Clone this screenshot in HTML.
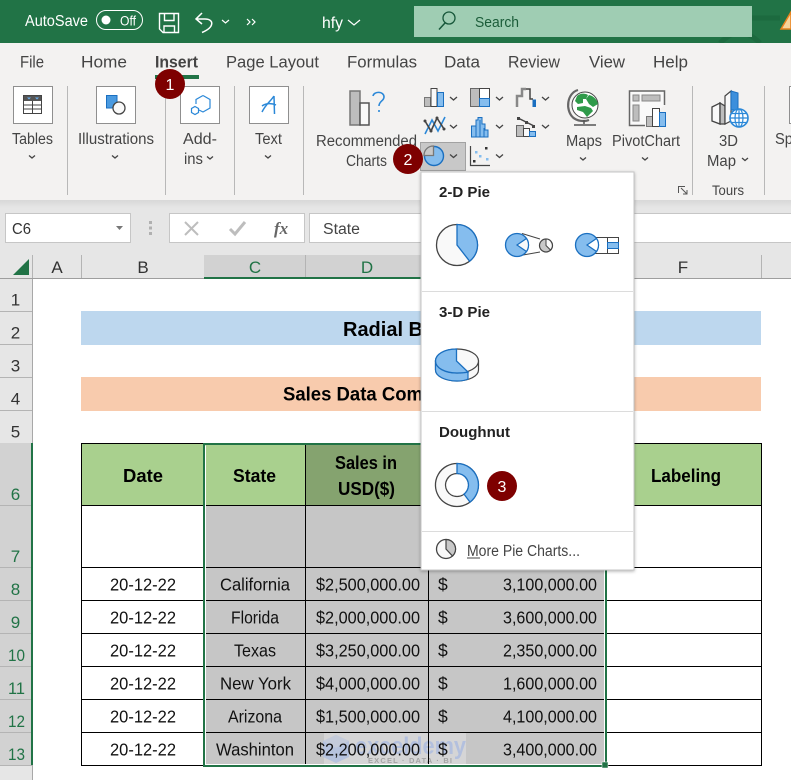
<!DOCTYPE html>
<html><head><meta charset="utf-8"><style>
html,body{margin:0;padding:0;background:#fff;width:791px;height:780px;overflow:hidden}
svg{display:block;font-family:"Liberation Sans",sans-serif}
.r{fill:#444;font-size:15.500px}
.t{fill:#444;font-size:16.500px}
.d{fill:#111;font-size:17.500px}
.b{fill:#000;font-size:18px;font-weight:bold}
.h{fill:#222;font-size:14.500px;font-weight:bold}
.n{fill:#333;font-size:17px}
.g{fill:#217346;font-size:17px}
.c{fill:none;stroke:#444;stroke-width:1.300}
.sep{stroke:#b8b8b8;stroke-width:1}
.ln{stroke:#000;stroke-width:1}
.hs{stroke:#b4b4b4;stroke-width:1}
.p{fill:#85bdee;stroke:#1a6fc0;stroke-width:1.300}
.q{fill:#f9f9f9;stroke:#444;stroke-width:1.300}
</style></head><body>
<svg width="791" height="780" viewBox="0 0 791 780" xmlns="http://www.w3.org/2000/svg">
<defs><linearGradient id="sh" x1="0" y1="0" x2="0" y2="1"><stop offset="0" stop-color="#d8d8d8"/><stop offset="1" stop-color="#e6e6e6"/></linearGradient>
<filter id="ms" x="-5%" y="-5%" width="110%" height="110%"><feDropShadow dx="0" dy="1" stdDeviation="1.500" flood-color="#000" flood-opacity=".3"/></filter></defs>

<!-- title bar -->
<rect width="791" height="43" fill="#217346"/>
<path d="M752 18H780M720 43q10-10 20-10t20 10" stroke="#1c6a3f" stroke-width="5" fill="none"/>
<text x="25" y="26" fill="#fff" font-size="15.500" textLength="63" lengthAdjust="spacingAndGlyphs">AutoSave</text>
<rect x="96.500" y="10.500" width="46" height="19" rx="9.500" fill="none" stroke="#fff"/>
<circle cx="106" cy="20" r="4.500" fill="#fff"/>
<text x="120" y="25.500" fill="#fff" font-size="13.500" textLength="16" lengthAdjust="spacingAndGlyphs">Off</text>
<path d="M159.500 13.500H178.500V32.500H163L159.500 29ZM164.500 13.500V20.500H174V13.500M164 32.500V26H174.500V32.500" fill="none" stroke="#fff" stroke-width="1.400"/>
<path d="M202 13L196 19L202 24M196 19H205C214 19 215 27 202 32.500" fill="none" stroke="#fff" stroke-width="1.500"/>
<path d="M222 20l3.500 3 3.500-3" fill="none" stroke="#fff" stroke-width="1.200"/>
<path d="M247 19l3 3-3 3M252 19l3 3-3 3" fill="none" stroke="#fff" stroke-width="1.200"/>
<text x="322" y="28" fill="#fff" font-size="16" textLength="21" lengthAdjust="spacingAndGlyphs">hfy</text>
<path d="M348 20l6 5 6-5" fill="none" stroke="#fff" stroke-width="1.200"/>
<rect x="414" y="6" width="338" height="31" fill="#9fcdb3"/>
<circle cx="449" cy="18" r="6" fill="none" stroke="#17573a" stroke-width="1.300"/>
<path d="M445 23l-6 6.500" stroke="#17573a" stroke-width="1.500"/>
<text x="475" y="27" fill="#1b5c39" font-size="15" textLength="44" lengthAdjust="spacingAndGlyphs">Search</text>
<path d="M781 29L791 12V29Z" fill="#f8d39a" stroke="#e8821e" stroke-width="1.500"/>

<!-- ribbon -->
<rect y="43" width="791" height="157" fill="#f3f2f1"/>
<text x="20" y="67.500" class="t" textLength="24" lengthAdjust="spacingAndGlyphs">File</text>
<text x="81" y="67.500" class="t" textLength="46" lengthAdjust="spacingAndGlyphs">Home</text>
<text x="155" y="67.500" class="t" font-weight="bold" textLength="43" lengthAdjust="spacingAndGlyphs">Insert</text>
<text x="226" y="67.500" class="t" textLength="93" lengthAdjust="spacingAndGlyphs">Page Layout</text>
<text x="347" y="67.500" class="t" textLength="70" lengthAdjust="spacingAndGlyphs">Formulas</text>
<text x="444" y="67.500" class="t" textLength="36" lengthAdjust="spacingAndGlyphs">Data</text>
<text x="508" y="67.500" class="t" textLength="52" lengthAdjust="spacingAndGlyphs">Review</text>
<text x="589" y="67.500" class="t" textLength="36" lengthAdjust="spacingAndGlyphs">View</text>
<text x="653" y="67.500" class="t" textLength="35" lengthAdjust="spacingAndGlyphs">Help</text>
<rect x="155" y="75" width="44" height="4" fill="#217346"/>

<!-- separators -->
<path class="sep" d="M67.500 86V195M165.500 86V195M234.500 86V195M303.500 86V195M692.500 86V195M764.500 86V195"/>

<!-- boxed buttons -->
<rect x="13.500" y="86.500" width="39" height="37" fill="#fff" stroke="#8f8f8f"/>
<rect x="96.500" y="86.500" width="39" height="37" fill="#fff" stroke="#8f8f8f"/>
<rect x="180.500" y="86.500" width="39" height="37" fill="#fff" stroke="#8f8f8f"/>
<rect x="249.500" y="86.500" width="39" height="37" fill="#fff" stroke="#8f8f8f"/>
<!-- tables icon -->
<rect x="23.500" y="95.500" width="18" height="18" fill="#fff" stroke="#444"/>
<rect x="24" y="96" width="17" height="5" fill="#555"/>
<path d="M27 97.500l2 2 2-2zM35 97.500l2 2 2-2z" fill="#6ab0ee"/>
<path d="M24 105H41M24 109H41M32.500 101V113" stroke="#444"/>
<!-- illustrations -->
<path d="M106.500 95.500H117V104L112 108H106.500Z" fill="#4a9ae0" stroke="#1a6fc0"/>
<circle cx="119" cy="108" r="6" fill="#f9f9f9" stroke="#444" stroke-width="1.300"/>
<!-- add-ins -->
<path d="M203 95.500L210 99.500V108L203 112L199 110M196 104V99.500L203 95.500" fill="none" stroke="#2b88d8" stroke-width="1.200"/>
<path d="M195 106.500l3.500 2v4l-3.500 2-3.500-2v-4z" fill="none" stroke="#2b88d8" stroke-width="1.200"/>
<!-- text icon -->
<path d="M274 96C270 102 266 104 262 112M274 96L274.500 114M262 106C266 103 272 103 276 105" fill="none" stroke="#2b88d8" stroke-width="1.500"/>

<text x="12" y="144" class="r" textLength="41" lengthAdjust="spacingAndGlyphs">Tables</text>
<path class="c" d="M29 155.500l3 2.500 3-2.500"/>
<text x="78" y="144" class="r" textLength="76" lengthAdjust="spacingAndGlyphs">Illustrations</text>
<path class="c" d="M112 155.500l3 2.500 3-2.500"/>
<text x="183" y="144" class="r" textLength="34" lengthAdjust="spacingAndGlyphs">Add-</text>
<text x="184" y="164" class="r" textLength="19" lengthAdjust="spacingAndGlyphs">ins</text>
<path class="c" d="M207 156.500l3 2.500 3-2.500"/>
<text x="255" y="144" class="r" textLength="27" lengthAdjust="spacingAndGlyphs">Text</text>
<path class="c" d="M265 155.500l3 2.500 3-2.500"/>

<!-- recommended -->
<rect x="350" y="91" width="10" height="34" fill="#bdbdbd" stroke="#777" stroke-width="1.500"/>
<rect x="360" y="103" width="9" height="22" fill="#f9f9f9" stroke="#555" stroke-width="1.500"/>
<path d="M373 96c1-5 11-5 11 1 0 4-5 4-5 9M379 110v2" fill="none" stroke="#2b88d8" stroke-width="1.600"/>
<text x="316" y="146" class="r" textLength="101" lengthAdjust="spacingAndGlyphs">Recommended</text>
<text x="346" y="166" class="r" textLength="41" lengthAdjust="spacingAndGlyphs">Charts</text>

<!-- chart icons -->
<rect x="420.500" y="142.500" width="45" height="28" fill="#c8c8c8" stroke="#a2a2a2"/>
<rect x="424.500" y="97.500" width="6" height="9" fill="#bdbdbd" stroke="#777"/>
<rect x="431" y="88.500" width="6" height="18" fill="#f9f9f9" stroke="#444"/>
<rect x="437.500" y="92.500" width="6" height="14" fill="#85bdee" stroke="#1a6fc0"/>
<path class="c" d="M450 97l3.500 3 3.500-3"/>
<rect x="470.500" y="88.500" width="9" height="18" fill="#bdbdbd" stroke="#666"/>
<rect x="479.500" y="88.500" width="10" height="10" fill="#fff" stroke="#444"/>
<rect x="479.500" y="98.500" width="10" height="8" fill="#85bdee" stroke="#1a6fc0"/>
<path class="c" d="M496 97l3.500 3 3.500-3"/>
<path d="M517 107V96H522V89H526" fill="none" stroke="#888" stroke-width="2.500"/>
<path d="M526 89H530V99H533" fill="none" stroke="#444" stroke-width="1.500"/>
<rect x="532.500" y="99.500" width="3.500" height="7.500" fill="#1a6fc0"/>
<path class="c" d="M542 97l3.500 3 3.500-3"/>
<path d="M425 134L432 120L438 131L445 117" fill="none" stroke="#2b88d8" stroke-width="1.600"/>
<path d="M425 121L431 131L437 118L444 129" fill="none" stroke="#444" stroke-width="1.600"/>
<circle cx="425" cy="121" r="1.500" fill="#444"/><circle cx="431" cy="131" r="1.500" fill="#444"/><circle cx="437" cy="118" r="1.500" fill="#444"/><circle cx="444" cy="129" r="1.500" fill="#444"/>
<path class="c" d="M450 125l3.500 3 3.500-3"/>
<path d="M471.500 137V126H476V120H478V117.500H482V124H485V130H488V137Z" fill="#85bdee" stroke="#1a6fc0"/>
<path d="M476 126V137M480 120V137M484 128V137" stroke="#1a6fc0"/>
<path class="c" d="M496 125l3.500 3 3.500-3"/>
<rect x="516.500" y="125.500" width="7" height="11" fill="#bdbdbd" stroke="#666"/>
<rect x="523.500" y="128.500" width="6" height="8" fill="#f9f9f9" stroke="#444"/>
<rect x="529.500" y="131.500" width="6" height="5" fill="#85bdee" stroke="#1a6fc0"/>
<path d="M518 118L534 126" stroke="#444" stroke-width="1.500"/>
<rect x="517" y="117" width="3" height="3" fill="#444"/><rect x="525" y="121" width="3" height="3" fill="#444"/><rect x="532" y="125" width="3" height="3" fill="#444"/>
<path class="c" d="M542 125l3.500 3 3.500-3"/>
<!-- pie small -->
<circle cx="434" cy="156" r="9.500" fill="#85bdee" stroke="#1a6fc0" stroke-width="1.400"/>
<path d="M424 155.500C424 150 428 146 433.500 146V155.500Z" fill="#c8c8c8" stroke="#777" stroke-width="1.300"/>
<path class="c" d="M450 154.500l3.500 3 3.500-3"/>
<!-- scatter -->
<path d="M470.500 146V165.500H490" fill="none" stroke="#444" stroke-width="1.200"/>
<rect x="473" y="160" width="2.500" height="2.500" fill="#333"/><rect x="485" y="147" width="2.500" height="2.500" fill="#333"/>
<rect x="475" y="151" width="2.500" height="2.500" fill="#85bdee"/><rect x="479" y="155" width="2.500" height="2.500" fill="#85bdee"/><rect x="486" y="158" width="2.500" height="2.500" fill="#85bdee"/>
<path class="c" d="M496 154.500l3.500 3 3.500-3"/>

<!-- globe -->
<circle cx="585" cy="105" r="13" fill="#fff" stroke="#444" stroke-width="1"/>
<path d="M577 96c3-3 8-3 11-1l-2 4-3 0 0 4-5 1-3-3zM589 95c5 1 8 5 9 9l-5 3-4-3-3-5zM577 107l8-1 6 2 2 3-6 6-4-5-6-2z" fill="#2f9a4a"/>
<path d="M578 90C567 93 565 110 573 117.500C577 121 584 122 589 120" fill="none" stroke="#666" stroke-width="2.200"/>
<path d="M584 120V124M574 125H596" stroke="#555" stroke-width="1.500"/>
<text x="566" y="146" class="r" textLength="36" lengthAdjust="spacingAndGlyphs">Maps</text>
<path class="c" d="M580 157.500l3 2.500 3-2.500"/>
<!-- pivot -->
<path d="M664.500 105V91H629.500V125.500H645" fill="#f9f9f9" stroke="#666" stroke-width="1.500"/>
<rect x="633" y="95" width="6" height="6" fill="#bdbdbd" stroke="#888"/>
<rect x="642" y="95" width="18" height="6" fill="#bdbdbd" stroke="#888"/>
<rect x="633" y="105" width="6" height="16" fill="#bdbdbd" stroke="#888"/>
<rect x="646.500" y="116.500" width="6" height="10" fill="#bdbdbd" stroke="#777"/>
<rect x="652.500" y="108.500" width="7" height="18" fill="#fff" stroke="#444"/>
<rect x="659.500" y="112.500" width="6" height="14" fill="#85bdee" stroke="#1a6fc0"/>
<text x="612" y="146" class="r" textLength="68" lengthAdjust="spacingAndGlyphs">PivotChart</text>
<path class="c" d="M642 157.500l3 2.500 3-2.500"/>
<!-- 3d map -->
<path d="M712 107L720 103V124L712 121Z" fill="#f9f9f9" stroke="#444" stroke-width="1.300"/>
<path d="M720 103L725 106V124H720Z" fill="#bdbdbd" stroke="#444" stroke-width="1.300"/>
<path d="M725 96L731 91V121L725 124Z" fill="#f9f9f9" stroke="#444" stroke-width="1.200"/>
<path d="M731 91L738 93V110H731Z" fill="#3c8fdc" stroke="#1a6fc0"/>
<circle cx="739" cy="118" r="9" fill="#fff" stroke="#2b88d8" stroke-width="1.600"/>
<path d="M730 118H748M731.500 113.500H746.500M731.500 122.500H746.500M739 109V127" stroke="#2b88d8" stroke-width="1.200"/>
<ellipse cx="739" cy="118" rx="4" ry="9" fill="none" stroke="#2b88d8" stroke-width="1.200"/>
<text x="719" y="146" class="r" textLength="19" lengthAdjust="spacingAndGlyphs">3D</text>
<text x="707" y="166" class="r" textLength="29" lengthAdjust="spacingAndGlyphs">Map</text>
<path class="c" d="M742 158l3 2.500 3-2.500"/>
<text x="712" y="195" fill="#444" font-size="13.500" textLength="32" lengthAdjust="spacingAndGlyphs">Tours</text>
<text x="775" y="144" class="r" textLength="18" lengthAdjust="spacingAndGlyphs">Sp</text>
<rect x="789.500" y="86.500" width="6" height="37" fill="#fff" stroke="#8f8f8f"/>
<path d="M678.500 193V186.500H685M681 188L687 194M687 190V194H683" fill="none" stroke="#555"/>

<!-- formula bar -->
<rect y="200" width="791" height="8" fill="url(#sh)"/>
<rect y="208" width="791" height="47" fill="#e6e6e6"/>
<rect x="5.500" y="213.500" width="125" height="29" fill="#fff" stroke="#c6c6c6"/>
<text x="12" y="234" fill="#333" font-size="15.500" textLength="19" lengthAdjust="spacingAndGlyphs">C6</text>
<path d="M116 226h7l-3.500 4z" fill="#777"/>
<path d="M149 221h3v3h-3zM149 226.500h3v3h-3zM149 232h3v3h-3z" fill="#b0b0b0"/>
<rect x="169.500" y="213.500" width="135" height="29" fill="#fff" stroke="#c6c6c6"/>
<rect x="309.500" y="213.500" width="490" height="29" fill="#fff" stroke="#c6c6c6"/>
<path d="M185 222L198 235M198 222L185 235" stroke="#bdbdbd" stroke-width="2"/>
<path d="M230 229L235 234L245 222" fill="none" stroke="#bdbdbd" stroke-width="3"/>
<text x="274" y="234" fill="#666" font-family="Liberation Serif" font-style="italic" font-weight="bold" font-size="17">fx</text>
<text x="323" y="234" fill="#444" font-size="15.500" textLength="37" lengthAdjust="spacingAndGlyphs">State</text>

<!-- column headers -->
<rect y="255" width="791" height="23" fill="#e6e6e6"/>
<rect x="204" y="255" width="404" height="23" fill="#d2d2d2"/>
<rect x="204" y="277" width="404" height="2" fill="#217346"/>
<path d="M0 278.500H204M608 278.500H791" stroke="#9e9e9e"/>
<path class="hs" d="M81.500 255V278M305.500 255V277M761.500 255V278"/>
<path d="M32.500 255V278" stroke="#b4b4b4"/>
<path d="M13 275L29 259V275Z" fill="#217346"/>
<text x="57" y="273" class="n" text-anchor="middle">A</text>
<text x="143" y="273" class="n" text-anchor="middle">B</text>
<text x="255" y="273" class="g" text-anchor="middle">C</text>
<text x="367" y="273" class="g" text-anchor="middle">D</text>
<text x="683" y="273" class="n" text-anchor="middle">F</text>

<!-- row headers -->
<rect y="279" width="32" height="501" fill="#e6e6e6"/>
<rect y="443" width="32" height="322" fill="#d2d2d2"/>
<path class="hs" d="M0 311.500H32M0 344.500H32M0 377.500H32M0 410.500H32M0 505.500H32M0 567.500H32M0 600.500H32M0 633.500H32M0 666.500H32M0 699.500H32M0 732.500H32M0 765.500H32"/>
<path d="M32.500 279V780" stroke="#a8a8a8"/>
<rect x="31" y="443" width="2" height="322" fill="#217346"/>
<text x="15.500" y="305.500" class="n" text-anchor="middle">1</text>
<text x="15.500" y="338.500" class="n" text-anchor="middle">2</text>
<text x="15.500" y="371.500" class="n" text-anchor="middle">3</text>
<text x="15.500" y="404.500" class="n" text-anchor="middle">4</text>
<text x="15.500" y="437.500" class="n" text-anchor="middle">5</text>
<text x="15.500" y="500" class="g" text-anchor="middle">6</text>
<text x="15.500" y="562" class="g" text-anchor="middle">7</text>
<text x="15.500" y="595" class="g" text-anchor="middle">8</text>
<text x="15.500" y="628" class="g" text-anchor="middle">9</text>
<text x="16.500" y="661" class="g" text-anchor="middle" textLength="17" lengthAdjust="spacingAndGlyphs">10</text>
<text x="16.500" y="694" class="g" text-anchor="middle" textLength="17" lengthAdjust="spacingAndGlyphs">11</text>
<text x="16.500" y="727" class="g" text-anchor="middle" textLength="17" lengthAdjust="spacingAndGlyphs">12</text>
<text x="16.500" y="760" class="g" text-anchor="middle" textLength="17" lengthAdjust="spacingAndGlyphs">13</text>

<!-- title bands -->
<rect x="81" y="311" width="680" height="34" fill="#bdd7ee"/>
<rect x="81" y="377" width="680" height="34" fill="#f8cbad"/>
<text x="343" y="336" class="b" style="font-size:20px" textLength="80" lengthAdjust="spacingAndGlyphs">Radial B</text>
<text x="283" y="400.500" class="b" style="font-size:19px" textLength="140" lengthAdjust="spacingAndGlyphs">Sales Data Com</text>

<!-- table fills -->
<rect x="81" y="443" width="123" height="62" fill="#a9d08e"/>
<rect x="204" y="443" width="101" height="62" fill="#a9d08e"/>
<rect x="305" y="443" width="302" height="62" fill="#85a36f"/>
<rect x="607" y="443" width="154" height="62" fill="#a9d08e"/>
<rect x="204" y="505" width="403" height="261" fill="#c6c6c6"/>

<!-- watermark -->
<rect x="324" y="733" width="142" height="31" fill="#d5d5d6"/>
<path d="M336 735L349 741V757L336 763L323 757V741Z" fill="#b6c3de"/>
<path d="M336 735L349 741L336 748L323 741Z" fill="#c4cbda"/>
<text x="355" y="754" fill="#b3c0de" font-size="24" font-weight="bold" textLength="111" lengthAdjust="spacingAndGlyphs">exceldemy</text>
<text x="368" y="763" fill="#a5a5a5" font-size="7.500" font-weight="bold" textLength="84" lengthAdjust="spacing">EXCEL · DATA · BI</text>

<!-- table lines -->
<path class="ln" d="M81 443.500H761M81 505.500H761M81 567.500H761M81 600.500H761M81 633.500H761M81 666.500H761M81 699.500H761M81 732.500H761M81 765.500H761"/>
<path class="ln" d="M81.500 443V766M305.500 443V765M428.500 443V765M761.500 443V766"/>

<!-- header text -->
<text x="123" y="482" class="b" textLength="40" lengthAdjust="spacingAndGlyphs">Date</text>
<text x="233" y="482" class="b" textLength="43" lengthAdjust="spacingAndGlyphs">State</text>
<text x="335" y="469" class="b" textLength="62" lengthAdjust="spacingAndGlyphs">Sales in</text>
<text x="338" y="495" class="b" textLength="57" lengthAdjust="spacingAndGlyphs">USD($)</text>
<text x="651" y="482" class="b" textLength="70" lengthAdjust="spacingAndGlyphs">Labeling</text>

<!-- data -->
<g class="d">
<text x="110" y="590.500" textLength="66" lengthAdjust="spacingAndGlyphs">20-12-22</text>
<text x="110" y="623.500" textLength="66" lengthAdjust="spacingAndGlyphs">20-12-22</text>
<text x="110" y="656.500" textLength="66" lengthAdjust="spacingAndGlyphs">20-12-22</text>
<text x="110" y="689.500" textLength="66" lengthAdjust="spacingAndGlyphs">20-12-22</text>
<text x="110" y="722.500" textLength="66" lengthAdjust="spacingAndGlyphs">20-12-22</text>
<text x="110" y="755.500" textLength="66" lengthAdjust="spacingAndGlyphs">20-12-22</text>
<text x="220" y="590.500" textLength="70" lengthAdjust="spacingAndGlyphs">California</text>
<text x="231" y="623.500" textLength="48" lengthAdjust="spacingAndGlyphs">Florida</text>
<text x="234" y="656.500" textLength="42" lengthAdjust="spacingAndGlyphs">Texas</text>
<text x="220" y="689.500" textLength="71" lengthAdjust="spacingAndGlyphs">New York</text>
<text x="228" y="722.500" textLength="54" lengthAdjust="spacingAndGlyphs">Arizona</text>
<text x="216" y="755.500" textLength="78" lengthAdjust="spacingAndGlyphs">Washinton</text>
<text x="316" y="590.500" textLength="104" lengthAdjust="spacingAndGlyphs">$2,500,000.00</text>
<text x="316" y="623.500" textLength="104" lengthAdjust="spacingAndGlyphs">$2,000,000.00</text>
<text x="316" y="656.500" textLength="104" lengthAdjust="spacingAndGlyphs">$3,250,000.00</text>
<text x="316" y="689.500" textLength="104" lengthAdjust="spacingAndGlyphs">$4,000,000.00</text>
<text x="316" y="722.500" textLength="104" lengthAdjust="spacingAndGlyphs">$1,500,000.00</text>
<text x="316" y="755.500" textLength="104" lengthAdjust="spacingAndGlyphs">$2,200,000.00</text>
<text x="438" y="590.500">$</text><text x="438" y="623.500">$</text><text x="438" y="656.500">$</text><text x="438" y="689.500">$</text><text x="438" y="722.500">$</text><text x="438" y="755.500">$</text>
<text x="503" y="590.500" textLength="94" lengthAdjust="spacingAndGlyphs">3,100,000.00</text>
<text x="503" y="623.500" textLength="94" lengthAdjust="spacingAndGlyphs">3,600,000.00</text>
<text x="503" y="656.500" textLength="94" lengthAdjust="spacingAndGlyphs">2,350,000.00</text>
<text x="503" y="689.500" textLength="94" lengthAdjust="spacingAndGlyphs">1,600,000.00</text>
<text x="503" y="722.500" textLength="94" lengthAdjust="spacingAndGlyphs">4,100,000.00</text>
<text x="503" y="755.500" textLength="94" lengthAdjust="spacingAndGlyphs">3,400,000.00</text>
</g>

<!-- selection -->
<path d="M205.500 445.500V764.500H604.500V505" fill="none" stroke="#fff"/>
<rect x="204" y="444" width="402" height="322" fill="none" stroke="#217346" stroke-width="2"/>
<rect x="602" y="762" width="6" height="6" fill="#217346" stroke="#fff" stroke-width=".5"/>

<!-- menu -->
<rect x="421" y="172" width="213" height="398" fill="#fff" stroke="#c6c6c6" filter="url(#ms)"/>
<text x="439" y="197" class="h" textLength="51" lengthAdjust="spacingAndGlyphs">2-D Pie</text>
<text x="439" y="317" class="h" textLength="51" lengthAdjust="spacingAndGlyphs">3-D Pie</text>
<text x="439" y="437" class="h" textLength="71" lengthAdjust="spacingAndGlyphs">Doughnut</text>
<path d="M422 291.500H633M422 411.500H633M422 531.500H633" stroke="#dcdcdc"/>
<!-- big pie -->
<circle cx="457" cy="245" r="20.500" class="q"/>
<path class="p" d="M457 245V224.500A20.500 20.500 0 0 1 469.600 261.200Z"/>
<!-- pie of pie -->
<path d="M522 233.500L540 239M523 255L540 252" stroke="#444"/>
<circle cx="517" cy="245" r="11.500" class="p"/>
<path d="M517 245L526.500 238.500A11.500 11.500 0 0 1 526.500 251.500Z" fill="#f9f9f9" stroke="#1a6fc0" stroke-width="1.200"/>
<circle cx="546" cy="245.500" r="6.500" fill="#c8c8c8" stroke="#444" stroke-width="1.200"/>
<path d="M546 245.500V239A6.500 6.500 0 0 1 550.500 250Z" fill="#f9f9f9" stroke="#444"/>
<!-- bar of pie -->
<path d="M592 237.500H607M592 253.500H607" stroke="#444"/>
<circle cx="587" cy="245" r="11.500" class="p"/>
<path d="M587 245L596.500 238.500A11.500 11.500 0 0 1 596.500 251.500Z" fill="#fff" stroke="#1a6fc0" stroke-width="1.200"/>
<rect x="607.500" y="237.500" width="11" height="16" fill="#fff" stroke="#444"/>
<rect x="607.500" y="242.500" width="11" height="6" fill="#85bdee" stroke="#1a6fc0"/>
<!-- 3d pie -->
<path d="M435.500 361V370C435.500 376 445 381 457 381S478.500 376 478.500 370V361Z" fill="#f9f9f9" stroke="#444" stroke-width="1.200"/>
<path d="M435.500 361V370C435.500 376 445 381 457 381C461 381 465 380.500 468 379V373L456 362Z" fill="#85bdee" stroke="#1a6fc0" stroke-width="1.200"/>
<ellipse cx="457" cy="361" rx="21.500" ry="12" fill="#f9f9f9" stroke="#444" stroke-width="1.200"/>
<path class="p" d="M456.500 361V349C444 349 435.500 354.500 435.500 361C435.500 368 445 373 457 373C461 373 465 372.800 468 372Z"/>
<!-- doughnut -->
<path class="q" fill-rule="evenodd" d="M457 463.500A21.500 21.500 0 1 1 456.900 463.500ZM457 473.500A11.500 11.500 0 1 0 457.100 473.500Z"/>
<path class="p" d="M457 463.500A21.500 21.500 0 0 1 470 502.100L464 494.100A11.500 11.500 0 0 0 457 473.500Z"/>
<!-- more pie -->
<circle cx="446" cy="549" r="9.500" fill="#f9f9f9" stroke="#444" stroke-width="1.300"/>
<path d="M446 549V539.500A9.500 9.500 0 0 1 452.500 556Z" fill="#c8c8c8" stroke="#444" stroke-width="1.200"/>
<text x="467" y="556" fill="#444" font-size="15.500" textLength="113" lengthAdjust="spacingAndGlyphs">More Pie Charts...</text>
<path d="M467 558H480" stroke="#444"/>

<!-- badges -->
<circle cx="170" cy="84" r="15" fill="#7e0000"/>
<text x="170" y="90" fill="#fff" font-size="16" text-anchor="middle">1</text>
<circle cx="408" cy="159" r="15" fill="#7e0000"/>
<text x="408" y="165" fill="#fff" font-size="16" text-anchor="middle">2</text>
<circle cx="502" cy="486" r="15" fill="#7e0000"/>
<text x="502" y="492" fill="#fff" font-size="16" text-anchor="middle">3</text>
</svg>
</body></html>
